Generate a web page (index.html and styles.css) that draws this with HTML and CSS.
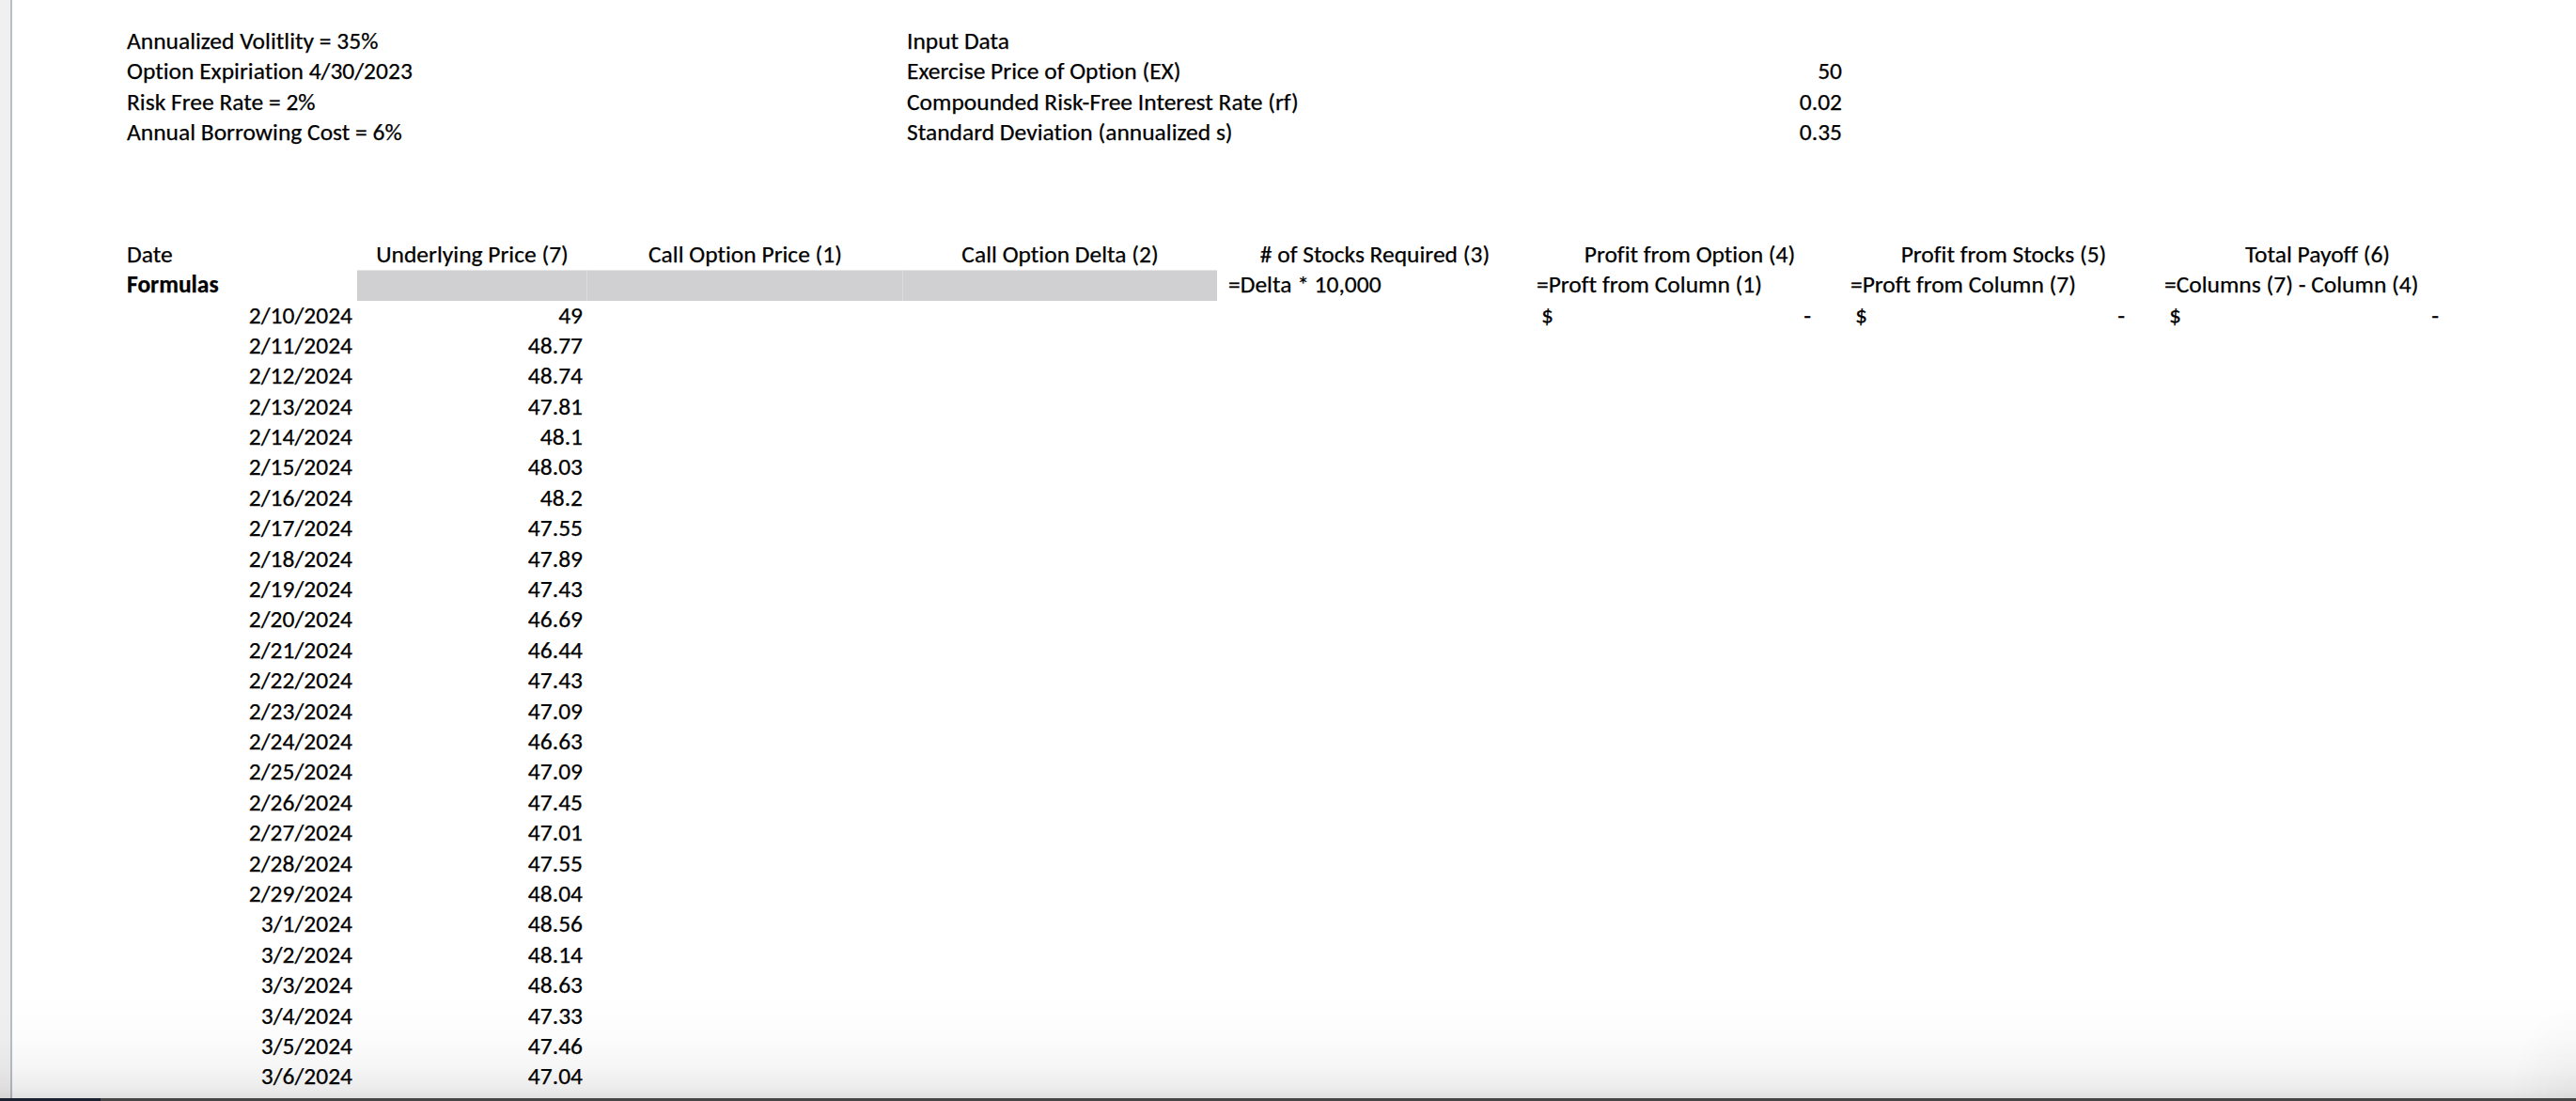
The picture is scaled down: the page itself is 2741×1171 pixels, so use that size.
FILE: index.html
```html
<!DOCTYPE html>
<html>
<head>
<meta charset="utf-8">
<title>Delta Hedging Sheet</title>
<link rel="stylesheet" href="styles.css">
</head>
<body>
<div class="app">
  <div class="rail"></div>
  <div class="sheet">
    <div class="row">
      <div class="c">Annualized Volitlity = 35%</div><div class="c"></div><div class="c"></div>
      <div class="c">Input Data</div><div class="c"></div><div class="c"></div><div class="c"></div><div class="c"></div>
    </div>
    <div class="row">
      <div class="c">Option Expiriation 4/30/2023</div><div class="c"></div><div class="c"></div>
      <div class="c">Exercise Price of Option (EX)</div><div class="c"></div><div class="c r">50</div><div class="c"></div><div class="c"></div>
    </div>
    <div class="row">
      <div class="c">Risk Free Rate = 2%</div><div class="c"></div><div class="c"></div>
      <div class="c">Compounded Risk-Free Interest Rate (rf)</div><div class="c"></div><div class="c r">0.02</div><div class="c"></div><div class="c"></div>
    </div>
    <div class="row">
      <div class="c">Annual Borrowing Cost = 6%</div><div class="c"></div><div class="c"></div>
      <div class="c">Standard Deviation (annualized s)</div><div class="c"></div><div class="c r">0.35</div><div class="c"></div><div class="c"></div>
    </div>
    <div class="row"></div>
    <div class="row"></div>
    <div class="row"></div>
    <div class="row">
      <div class="c">Date</div>
      <div class="c ctr">Underlying Price (7)</div>
      <div class="c ctr">Call Option Price (1)</div>
      <div class="c ctr">Call Option Delta (2)</div>
      <div class="c ctr"># of Stocks Required (3)</div>
      <div class="c ctr">Profit from Option (4)</div>
      <div class="c ctr">Profit from Stocks (5)</div>
      <div class="c ctr">Total Payoff (6)</div>
    </div>
    <div class="row">
      <div class="c bold">Formulas</div>
      <div class="c fill"></div>
      <div class="c fill"></div>
      <div class="c fill last"></div>
      <div class="c indent">=Delta * 10,000</div>
      <div class="c">=Proft from Column (1)</div>
      <div class="c">=Proft from Column (7)</div>
      <div class="c">=Columns (7) - Column (4)</div>
    </div>
    <div class="row">
      <div class="c r">2/10/2024</div><div class="c r">49</div><div class="c"></div><div class="c"></div><div class="c"></div>
      <div class="c acct"><span>$</span><span>-</span></div>
      <div class="c acct"><span>$</span><span>-</span></div>
      <div class="c acct"><span>$</span><span>-</span></div>
    </div>
    <div class="row"><div class="c r">2/11/2024</div><div class="c r">48.77</div></div>
    <div class="row"><div class="c r">2/12/2024</div><div class="c r">48.74</div></div>
    <div class="row"><div class="c r">2/13/2024</div><div class="c r">47.81</div></div>
    <div class="row"><div class="c r">2/14/2024</div><div class="c r">48.1</div></div>
    <div class="row"><div class="c r">2/15/2024</div><div class="c r">48.03</div></div>
    <div class="row"><div class="c r">2/16/2024</div><div class="c r">48.2</div></div>
    <div class="row"><div class="c r">2/17/2024</div><div class="c r">47.55</div></div>
    <div class="row"><div class="c r">2/18/2024</div><div class="c r">47.89</div></div>
    <div class="row"><div class="c r">2/19/2024</div><div class="c r">47.43</div></div>
    <div class="row"><div class="c r">2/20/2024</div><div class="c r">46.69</div></div>
    <div class="row"><div class="c r">2/21/2024</div><div class="c r">46.44</div></div>
    <div class="row"><div class="c r">2/22/2024</div><div class="c r">47.43</div></div>
    <div class="row"><div class="c r">2/23/2024</div><div class="c r">47.09</div></div>
    <div class="row"><div class="c r">2/24/2024</div><div class="c r">46.63</div></div>
    <div class="row"><div class="c r">2/25/2024</div><div class="c r">47.09</div></div>
    <div class="row"><div class="c r">2/26/2024</div><div class="c r">47.45</div></div>
    <div class="row"><div class="c r">2/27/2024</div><div class="c r">47.01</div></div>
    <div class="row"><div class="c r">2/28/2024</div><div class="c r">47.55</div></div>
    <div class="row"><div class="c r">2/29/2024</div><div class="c r">48.04</div></div>
    <div class="row"><div class="c r">3/1/2024</div><div class="c r">48.56</div></div>
    <div class="row"><div class="c r">3/2/2024</div><div class="c r">48.14</div></div>
    <div class="row"><div class="c r">3/3/2024</div><div class="c r">48.63</div></div>
    <div class="row"><div class="c r">3/4/2024</div><div class="c r">47.33</div></div>
    <div class="row"><div class="c r">3/5/2024</div><div class="c r">47.46</div></div>
    <div class="row"><div class="c r">3/6/2024</div><div class="c r">47.04</div></div>
  </div>
</div>
<div class="shade"></div>
<div class="dock"><div class="dock-left"></div></div>
</body>
</html>
```
FILE: styles.css
```css
html, body {
  margin: 0;
  padding: 0;
  background: #ffffff;
  overflow: hidden;
  height: 1171px;
}

body {
  font-family: Carlito, Calibri, "Liberation Sans", sans-serif;
  font-size: 25.5px;
  color: #000000;
  -webkit-text-stroke: 0.25px #000000;
  font-variant-ligatures: none;
}

.app {
  display: flex;
  height: 1171px;
}

.rail {
  width: 11px;
  flex: none;
  background: #f0f0f0;
  border-right: 2px solid #b9bec4;
}

.sheet {
  flex: 1;
  padding: 28px 0 0 118px;
}

.row {
  display: grid;
  grid-template-columns: 249px 245px 336px 334px 336px 334px 334px 334px;
  height: 32.4px;
}

.c {
  padding: 0 4px;
  line-height: 32.4px;
  white-space: nowrap;
  overflow: visible;
  min-width: 0;
}

.r { text-align: right; padding-right: 5px; }
.ctr { text-align: center; }
.bold { font-weight: bold; }
.indent { padding-left: 12px; }

.fill {
  background: #d0cfd1;
  border-right: 1px solid #dcdcdc;
  border-top: 1px solid #e6e6e6;
}
.fill.last { border-right: none; }

.acct {
  display: flex;
  justify-content: space-between;
  padding-left: 9px;
  padding-right: 38px;
}

.shade {
  position: fixed;
  left: 0;
  right: 0;
  bottom: 3px;
  height: 110px;
  pointer-events: none;
  background:
    radial-gradient(ellipse 70px 100px at 100% 100%, rgba(0,0,0,0.035), rgba(0,0,0,0)),
    linear-gradient(to bottom, rgba(0,0,0,0) 0%, rgba(0,0,0,0.01) 40%, rgba(0,0,0,0.035) 70%, rgba(0,0,0,0.075) 90%, rgba(0,0,0,0.115) 100%);
}

.dock {
  position: fixed;
  left: 0;
  right: 0;
  bottom: 0;
  height: 3px;
  background: #464646;
}

.dock-left {
  width: 107px;
  height: 3px;
  background: #1b2130;
}
```
